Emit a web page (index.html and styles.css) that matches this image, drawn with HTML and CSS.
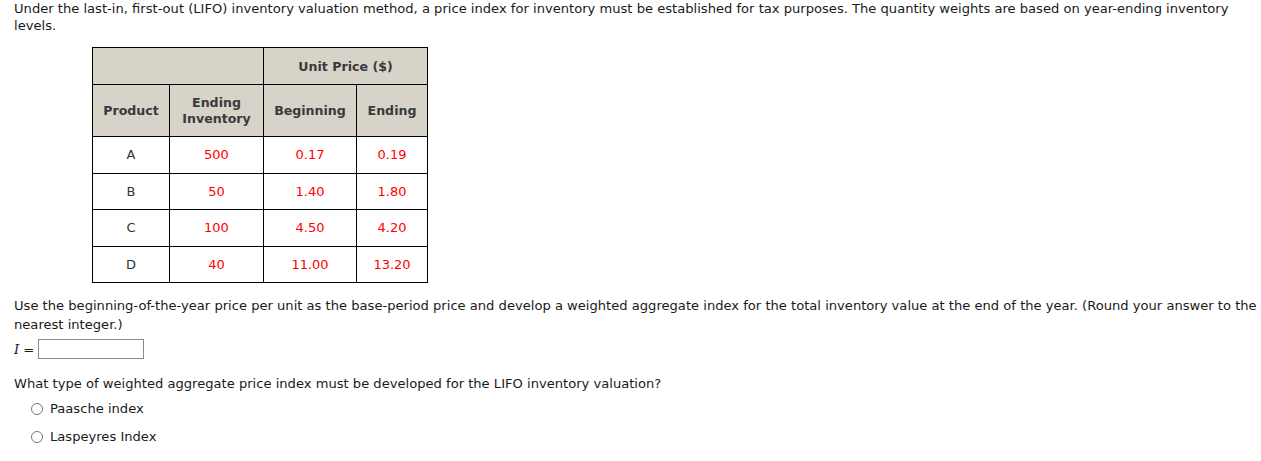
FILE: index.html
```html
<!DOCTYPE html>
<html>
<head>
<meta charset="utf-8">
<link rel="stylesheet" href="styles.css">
</head>
<body>
<div class="page">
  <p class="intro">Under the last-in, first-out (LIFO) inventory valuation method, a price index for inventory must be established for tax purposes. The quantity weights are based on year-ending inventory levels.</p>
  <table class="data">
    <thead>
      <tr>
        <th colspan="2" class="blank"></th>
        <th colspan="2" class="group">Unit Price ($)</th>
      </tr>
      <tr class="sub">
        <th class="c1">Product</th>
        <th class="c2">Ending<br>Inventory</th>
        <th class="c3">Beginning</th>
        <th class="c4">Ending</th>
      </tr>
    </thead>
    <tbody>
      <tr><td class="prod">A</td><td class="red">500</td><td class="red">0.17</td><td class="red">0.19</td></tr>
      <tr><td class="prod">B</td><td class="red">50</td><td class="red">1.40</td><td class="red">1.80</td></tr>
      <tr><td class="prod">C</td><td class="red">100</td><td class="red">4.50</td><td class="red">4.20</td></tr>
      <tr><td class="prod">D</td><td class="red">40</td><td class="red">11.00</td><td class="red">13.20</td></tr>
    </tbody>
  </table>
  <p class="question">Use the beginning-of-the-year price per unit as the base-period price and develop a weighted aggregate index for the total inventory value at the end of the year. (Round your answer to the nearest integer.)</p>
  <div class="answer"><span class="var">I</span><span class="eq">=</span><span class="box"></span></div>
  <p class="question2">What type of weighted aggregate price index must be developed for the LIFO inventory valuation?</p>
  <div class="options">
    <label class="opt"><span class="radio"></span>Paasche index</label>
    <label class="opt"><span class="radio"></span>Laspeyres Index</label>
  </div>
</div>
</body>
</html>
```
FILE: styles.css
```css
html, body { margin: 0; padding: 0; background: #fff; }
body {
  font-family: "DejaVu Sans", Verdana, sans-serif;
  font-size: 13.1px;
  color: #1a1a1a;
}
.page { padding: 0 3px 0 14px; }
.intro { margin: 0; line-height: 17px; }
.data {
  border-collapse: collapse;
  margin: 13px 0 0 78px;
}
.data th, .data td {
  border: 1px solid #000;
  text-align: center;
  padding: 0;
}
.data th {
  background: #d7d3c9;
  color: #3a3a3a;
  font-weight: bold;
  font-size: 12.6px;
}
.data th.group { height: 36px; }
.data tr.sub th { height: 51px; line-height: 16px; }
.c1 { width: 76px; }
.c2 { width: 93px; }
.c3 { width: 92px; }
.c4 { width: 70px; }
.data td { height: 35.5px; font-size: 13px; }
.prod { color: #333; }
.red { color: #f00; }
.question { margin: 13px 0 0; line-height: 19px; }
.answer { display: flex; align-items: center; height: 22px; margin-top: 4px; }
.var { font-family: "DejaVu Serif", serif; font-style: italic; margin-right: 4px; }
.eq { margin-right: 4px; }
.box {
  display: inline-block;
  border: 1px solid #8a8a8a;
  box-sizing: border-box;
  height: 20px;
  width: 106px;
}
.question2 { margin: 15px 0 0; line-height: 17px; }
.options { display: flex; flex-direction: column; padding-left: 17px; margin-top: 8px; gap: 10px; }
.opt { display: flex; align-items: center; line-height: 18px; }
.radio {
  width: 12px; height: 12px;
  border: 1px solid #777;
  border-radius: 50%;
  margin-right: 7px;
  box-sizing: border-box;
}
```
